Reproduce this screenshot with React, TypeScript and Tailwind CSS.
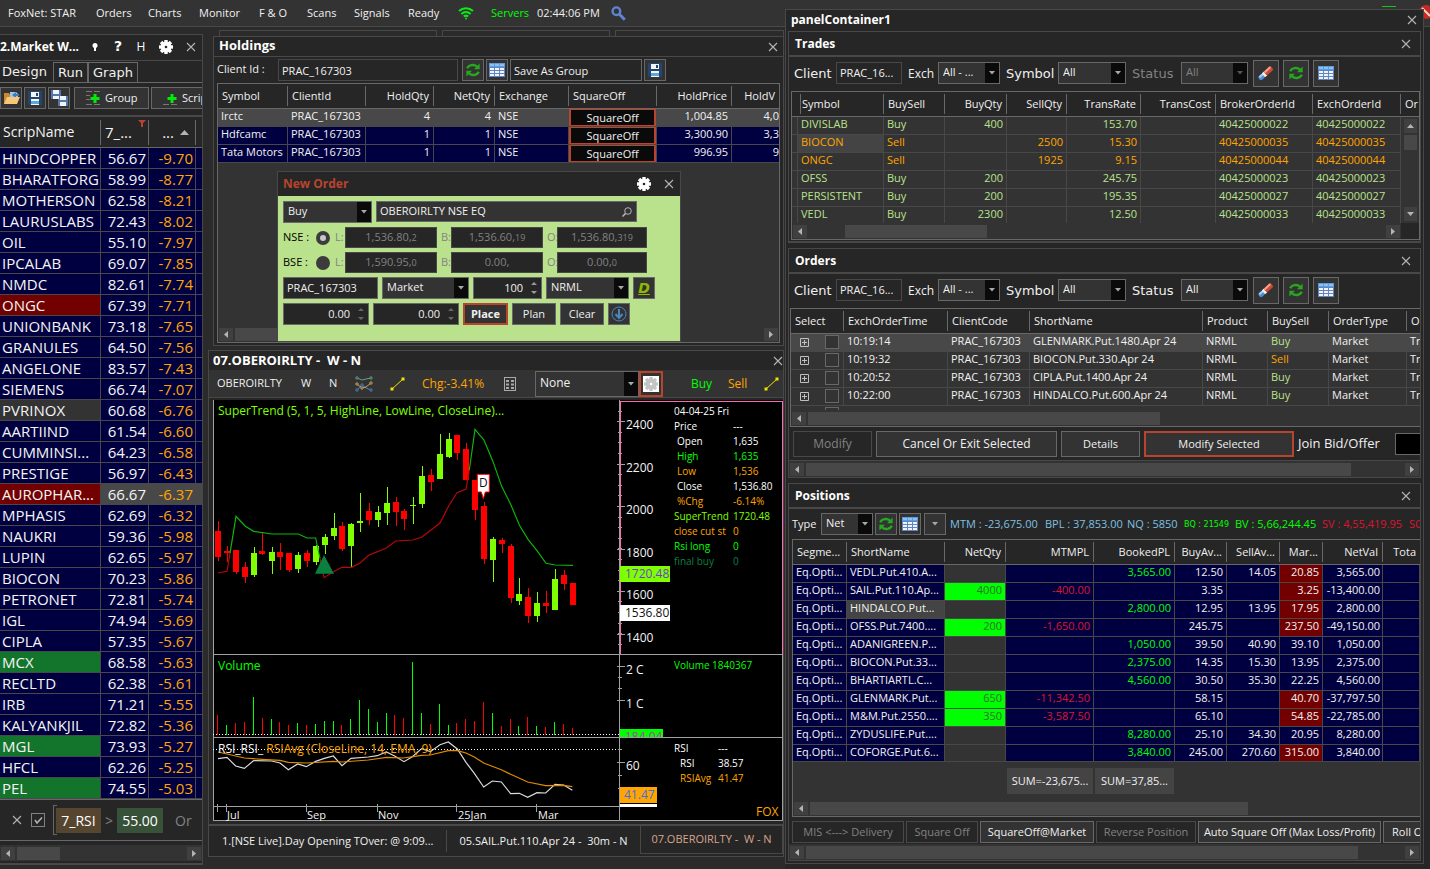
import React from 'react';

type Align = 'left' | 'right' | 'center';

interface Column {
  title: string;
  width?: number;
  align?: Align;
}

interface Cell {
  content: React.ReactNode;
  cls?: string;
}

type CellValue = React.ReactNode | Cell;

const isCell = (value: CellValue): value is Cell =>
  typeof value === 'object' && value !== null && 'content' in (value as object);

const alignClass: Record<Align, string> = {
  left: 'text-left',
  right: 'text-right',
  center: 'text-center',
};

/* ---------- Icons ---------- */

const CloseIcon = () => (
  <svg width="10" height="10" viewBox="0 0 10 10" stroke="#b4b4b4" strokeWidth="1.1">
    <path d="M1 1l8 8M9 1L1 9" />
  </svg>
);

const RefreshIcon = () => (
  <svg width="16" height="16" viewBox="0 0 16 16" fill="none" stroke="#27a81f" strokeWidth="2.4">
    <path d="M2.2 6.2C3.6 3 8.6 1.6 12 4.6" />
    <path d="M13.8 9.8C12.4 13 7.4 14.4 4 11.4" />
    <path d="M14.6 1.6v5.6H9z" fill="#27a81f" stroke="none" />
    <path d="M1.4 14.4V8.8H7z" fill="#27a81f" stroke="none" />
  </svg>
);

const TableIcon = () => (
  <svg width="16" height="14" viewBox="0 0 16 14">
    <rect width="16" height="14" fill="#5f86c0" />
    <rect x="0" y="0" width="16" height="4" fill="#5b9be0" />
    <path d="M1 1h4v2H1zM6 1h4v2H6zM11 1h4v2h-4z" fill="#8cc0f2" />
    <path d="M1 5h4v2H1zM6 5h4v2H6zM11 5h4v2h-4zM1 8h4v2H1zM6 8h4v2H6zM11 8h4v2h-4zM1 11h4v2H1zM6 11h4v2H6zM11 11h4v2h-4z" fill="#f1f2fb" />
  </svg>
);

const EraserIcon = () => (
  <svg width="16" height="16" viewBox="0 0 16 16">
    <g transform="rotate(-42 8 8)">
      <rect x="-1" y="5.500" width="6" height="5" rx="2" fill="#4b8fd8" />
      <rect x="0" y="5.800" width="5" height="2" rx="1" fill="#a9cdf2" />
      <rect x="4.500" y="5.500" width="3" height="5" fill="#f3efec" />
      <rect x="7" y="5.500" width="9" height="5" rx="1.500" fill="#cf4a32" />
      <rect x="7" y="5.500" width="8.500" height="2" rx="1" fill="#f2a48f" />
    </g>
  </svg>
);

const FloppyIcon = () => (
  <svg width="14" height="14" viewBox="0 0 14 14">
    <path d="M0 0h14v14H1l-1-1z" fill="#24466e" />
    <path d="M3 1h8v5H3z" fill="#f2f5f8" />
    <path d="M8 2h2v3H8z" fill="#24466e" />
    <path d="M3 8h8v6H3z" fill="#f4f7fa" />
    <path d="M3 10h8v3H3z" fill="#5aa8dc" />
  </svg>
);

const FolderIcon = () => (
  <svg width="17" height="14" viewBox="0 0 17 14">
    <path d="M1 2h5l1 2h7v9H1z" fill="#c98a35" />
    <path d="M7 1h6l2 2v4H7z" fill="#9cc7ee" />
    <path d="M9 4l4-3v2h3v2h-3v2z" fill="#3f7db8" />
    <path d="M1 13l3-7h13l-3 7z" fill="#f8c877" />
  </svg>
);

const GearIcon = ({ size = 14, color = '#ffffff', hole = '#262626' }: { size?: number; color?: string; hole?: string }) => (
  <svg width={size} height={size} viewBox="-7 -7 14 14">
    <circle r="5.4" fill={color} />
    {[0, 45, 90, 135].map(angle => (
      <rect key={angle} x="-1.7" y="-7" width="3.4" height="14" fill={color} transform={`rotate(${angle})`} />
    ))}
    <circle r="1.3" fill={hole} />
  </svg>
);

const WifiIcon = () => (
  <svg width="16" height="14" viewBox="0 0 16 14" fill="none" stroke="#12e61a" strokeWidth="2">
    <path d="M1 5C5 1.2 11 1.2 15 5" />
    <path d="M3.4 8C6 5.4 10 5.4 12.6 8" />
    <path d="M5.8 10.6c1.4-1.2 3-1.2 4.4 0" />
    <circle cx="8" cy="12.4" r="1" fill="#12e61a" stroke="none" />
  </svg>
);

const KeySearchIcon = () => (
  <svg width="15" height="15" viewBox="0 0 15 15" fill="none" stroke="#5f85d2">
    <circle cx="5.4" cy="5.2" r="3.8" strokeWidth="2.4" />
    <path d="M8.4 8.2l5.4 5.6" strokeWidth="3" />
  </svg>
);

const TrendIcon = () => (
  <svg width="16" height="14" viewBox="0 0 16 14">
    <path d="M2 12L13 2" stroke="#f2e200" />
    <rect x="0.5" y="10.5" width="3" height="3" fill="#f2e200" />
    <rect x="11.5" y="0.5" width="3" height="3" fill="#f2e200" />
  </svg>
);

const IndicatorIcon = () => (
  <svg width="18" height="16" viewBox="0 0 18 16" fill="none">
    <path d="M2 2l5 2 4-1 5-1" stroke="#5fa08d" />
    <path d="M2 14l5-5 4 3 5 2" stroke="#4a7fc0" />
    <path d="M2 8l5 4 4-1 5-4" stroke="#d0a55a" />
    <g fill="#333">
      <circle cx="2" cy="2" r="1.2" stroke="#5fa08d" />
      <circle cx="16" cy="2" r="1.2" stroke="#5fa08d" />
      <circle cx="2" cy="8" r="1.2" stroke="#d0a55a" />
      <circle cx="16" cy="7" r="1.2" stroke="#d0a55a" />
      <circle cx="2" cy="14" r="1.2" stroke="#4a7fc0" />
      <circle cx="16" cy="14" r="1.2" stroke="#4a7fc0" />
      <circle cx="7" cy="12" r="1.2" stroke="#d0a55a" />
      <circle cx="7" cy="9" r="1.2" stroke="#4a7fc0" />
    </g>
  </svg>
);

const SheetIcon = () => (
  <svg width="12" height="14" viewBox="0 0 12 14">
    <rect x="0.5" y="0.5" width="11" height="13" fill="none" stroke="#a8a8a8" />
    <path d="M2 3h3v2H2zM7 3h3v2H7zM2 6.500h3v2H2zM7 6.500h3v2H7zM2 10h3v2H2zM7 10h3v2H7z" fill="#a8a8a8" />
  </svg>
);

const AddRowsIcon = () => (
  <svg width="14" height="14" viewBox="0 0 14 14">
    <path d="M0 0h6v1H0zM8 0h6v1H8zM0 4h4v1H0zM0 8h4v1H0zM0 13h6v1H0zM8 13h6v1H8z" fill="#777" />
    <path d="M7.500 3h3v3h3v3h-3v3h-3V9h-3V6h3z" fill="#05e80a" />
  </svg>
);

const AddScripIcon = () => (
  <svg width="14" height="14" viewBox="0 0 14 14">
    <path d="M0 13h6v1H0zM8 13h6v1H8z" fill="#777" />
    <path d="M7.500 3h3v3h3v3h-3v3h-3V9h-3V6h3z" fill="#05e80a" />
  </svg>
);

const Caret = ({ dim }: { dim?: boolean }) => (
  <svg width="6" height="4" viewBox="0 0 6 4">
    <path d="M0 0h6L3 3.500z" fill={dim ? '#555' : '#a8a8a8'} />
  </svg>
);

/* ---------- Shared controls ---------- */

const IconButton = ({ label, children, className = 'h-[22px] w-[22px]' }: { label: string; children: React.ReactNode; className?: string }) => (
  <button aria-label={label} className={`flex shrink-0 items-center justify-center border border-[#686868] bg-[#333333] ${className}`}>
    {children}
  </button>
);

const SelectBox = ({ label, value, className, dim }: { label: string; value: string; className: string; dim?: boolean }) => (
  <div className={`relative flex h-[22px] shrink-0 border border-[#686868] bg-[#333333] ${className}`}>
    <select
      aria-label={label}
      disabled={dim}
      className={`w-full min-w-0 appearance-none bg-transparent pb-[2px] pl-1 text-[11px] leading-[18px] outline-none ${dim ? 'text-[#828282]' : 'text-[#f0f0f0]'}`}
    >
      <option>{value}</option>
    </select>
    <span className="pointer-events-none absolute inset-y-0 right-0 flex w-[14px] items-center justify-center bg-[#0a0a0a]">
      <Caret dim={dim} />
    </span>
  </div>
);

const TextField = ({ label, value, className }: { label: string; value: string; className: string }) => (
  <input
    aria-label={label}
    defaultValue={value}
    className={`h-[22px] min-w-0 border bg-[#262626] px-[3px] pb-[2px] text-[11px] text-[#f0f0f0] outline-none ${className}`}
  />
);

const Spinner = ({ label, value, className, dim }: { label: string; value: string; className: string; dim?: boolean }) => (
  <div className={`flex h-[22px] items-center border border-[#686868] bg-[#262626] ${className}`}>
    <input
      aria-label={label}
      defaultValue={value}
      className="w-full min-w-0 bg-transparent pr-2 text-right text-[11px] text-[#f0f0f0] outline-none"
    />
    <svg width="6" height="12" viewBox="0 0 6 12" className="mr-1 shrink-0">
      <path d="M0 3h6L3 0zM0 9h6l-3 3z" fill={dim ? '#666' : '#999'} />
    </svg>
  </div>
);

const ScrollBar = ({ thumb, right = true }: { thumb: string; right?: boolean }) => (
  <div className="flex h-4 items-center bg-[#333333] px-px">
    <span className="flex h-[13px] w-[14px] shrink-0 items-center justify-center bg-[#404040]">
      <svg width="4" height="7" viewBox="0 0 4 7"><path d="M4 0v7L0 3.500z" fill="#b4b4b4" /></svg>
    </span>
    <span className="h-[13px] flex-1 px-[2px]">
      <span className={`block h-full bg-[#484848] ${thumb}`} />
    </span>
    {right && (
      <span className="flex h-[13px] w-[14px] shrink-0 items-center justify-center bg-[#404040]">
        <svg width="4" height="7" viewBox="0 0 4 7"><path d="M0 0v7l4-3.500z" fill="#b4b4b4" /></svg>
      </span>
    )}
  </div>
);

const PanelTitle = ({ children }: { children: React.ReactNode }) => (
  <div className="flex h-[25px] items-center justify-between border-b-2 border-[#484848] px-[6px]">
    <h2 className="text-[12px] font-bold leading-5 text-white">{children}</h2>
    <button aria-label="Close" className="mr-[3px]"><CloseIcon /></button>
  </div>
);

const DataGrid = ({ columns, rows, rowClass }: {
  columns: Column[];
  rows: CellValue[][];
  rowClass?: (index: number) => string;
}) => (
  <table className="w-full table-fixed border-separate border-spacing-0 text-[11px] text-[#f0f0f0]">
    <colgroup>
      {columns.map((c, i) => <col key={i} style={c.width ? { width: c.width } : undefined} />)}
    </colgroup>
    <thead>
      <tr className="bg-[#262626]">
        {columns.map((c, i) => (
          <th key={i} className={`h-[25px] border-b border-[#686868] p-0 font-normal ${alignClass[c.align ?? 'left']}`}>
            <div className={`h-5 overflow-hidden whitespace-nowrap px-1 leading-5 ${i < columns.length - 1 ? 'border-r border-[#686868]' : ''}`}>
              {c.title}
            </div>
          </th>
        ))}
      </tr>
    </thead>
    <tbody>
      {rows.map((row, r) => (
        <tr key={r} className={rowClass ? rowClass(r) : ''}>
          {row.map((value, i) => {
            const cell: Cell = isCell(value) ? value : { content: value as React.ReactNode };
            return (
              <td
                key={i}
                className={`h-[18px] overflow-hidden whitespace-nowrap border-b border-r border-[#484848] px-[3px] pb-[3px] pt-0 leading-[14px] ${alignClass[columns[i].align ?? 'left']} ${cell.cls ?? ''}`}
              >
                {cell.content}
              </td>
            );
          })}
        </tr>
      ))}
    </tbody>
  </table>
);

/* ---------- Market watch ---------- */

const scrips: [string, string, string, string?][] = [
  ['HINDCOPPER', '56.67', '-9.70'],
  ['BHARATFORG', '58.99', '-8.77'],
  ['MOTHERSON', '62.58', '-8.21'],
  ['LAURUSLABS', '72.43', '-8.02'],
  ['OIL', '55.10', '-7.97'],
  ['IPCALAB', '69.07', '-7.85'],
  ['NMDC', '82.61', '-7.74'],
  ['ONGC', '67.39', '-7.71', 'bg-[#730000]'],
  ['UNIONBANK', '73.18', '-7.65'],
  ['GRANULES', '64.50', '-7.56'],
  ['ANGELONE', '83.57', '-7.43'],
  ['SIEMENS', '66.74', '-7.07'],
  ['PVRINOX', '60.68', '-6.76', 'bg-[#333333]'],
  ['AARTIIND', '61.54', '-6.60'],
  ['CUMMINSI...', '64.23', '-6.58'],
  ['PRESTIGE', '56.97', '-6.43'],
  ['AUROPHAR...', '66.67', '-6.37', 'bg-[#730000]'],
  ['MPHASIS', '62.69', '-6.32'],
  ['NAUKRI', '59.36', '-5.98'],
  ['LUPIN', '62.65', '-5.97'],
  ['BIOCON', '70.23', '-5.86'],
  ['PETRONET', '72.81', '-5.74'],
  ['IGL', '74.94', '-5.69'],
  ['CIPLA', '57.35', '-5.67'],
  ['MCX', '68.58', '-5.63', 'bg-[#13752b]'],
  ['RECLTD', '62.38', '-5.61'],
  ['IRB', '71.21', '-5.55'],
  ['KALYANKJIL', '72.82', '-5.36'],
  ['MGL', '73.93', '-5.27', 'bg-[#13752b]'],
  ['HFCL', '62.26', '-5.25'],
  ['PEL', '74.55', '-5.03', 'bg-[#13752b]'],
];

const MarketWatch = () => (
  <aside className="mt-[7px] w-[203px] shrink-0 self-start overflow-hidden border-r border-t border-[#484848] bg-[#262626]">
    <div className="flex h-[26px] items-center border-b border-[#484848] pb-[2px] text-white">
      <h2 className="w-[91px] whitespace-nowrap text-[12px] font-bold">2.Market W...</h2>
      <button aria-label="Pin" className="w-[10px]">
        <svg width="8" height="12" viewBox="0 0 8 12"><circle cx="4" cy="4.500" r="2.500" fill="#fff" /><path d="M3 5h2v5H3z" fill="#fff" /></svg>
      </button>
      <button aria-label="Help" className="w-[34px] font-['DejaVu_Sans'] text-[14px] font-bold">?</button>
      <button aria-label="History" className="w-3 text-[12px]">H</button>
      <button aria-label="Settings" className="ml-[12px]"><GearIcon /></button>
      <button aria-label="Close" className="ml-[13px]"><CloseIcon /></button>
    </div>
    <div className="flex h-[22px] items-end border-b border-[#686868] font-['DejaVu_Sans'] text-[13px] text-[#f0f0f0]">
      <button className="h-5 w-[53px] pl-[2px] text-left">Design</button>
      <button className="h-5 w-[35px] border border-b-0 border-[#686868] leading-[18px]">Run</button>
      <button className="h-5 w-[50px] border border-b-0 border-[#686868] leading-[18px]">Graph</button>
    </div>
    <div className="flex h-[34px] gap-[2px] border-b-2 border-[#484848] pt-1 text-[11px] text-[#f0f0f0]">
      <IconButton label="Open"><FolderIcon /></IconButton>
      <IconButton label="Save"><FloppyIcon /></IconButton>
      <IconButton label="Save all">
        <svg width="17" height="16" viewBox="0 0 17 16">
          <path d="M0 0h10v9H0zM7 6h10v10H7z" fill="#5476a8" />
          <path d="M2 0h6v4H2zM2 6h6v3H2zM9 6h6v4H9zM9 12h6v4H9z" fill="#eef4fb" />
        </svg>
      </IconButton>
      <button className="ml-[2px] flex h-[22px] w-[75px] shrink-0 items-center gap-[5px] border border-[#686868] bg-[#333333] pl-[11px]"><AddRowsIcon />Group</button>
      <button className="flex h-[22px] w-[75px] shrink-0 items-center gap-[5px] border border-[#686868] bg-[#333333] pl-[11px]"><AddScripIcon />Scrip</button>
    </div>
    <table className="w-full table-fixed border-separate border-spacing-0 text-[15px] text-[#f4f4f4]">
      <colgroup>
        <col className="w-[101px]" />
        <col className="w-12" />
        <col className="w-[47px]" />
        <col />
      </colgroup>
      <thead>
        <tr className="text-left">
          <th className="h-[31px] border-b border-[#686868] p-0 font-normal"><div className="h-[25px] border-r border-[#686868] pl-[3px] text-[14px] leading-6">ScripName</div></th>
          <th className="border-b border-[#686868] p-0 font-normal">
            <div className="flex h-[25px] justify-between border-r border-[#686868] pl-1 pr-[2px] leading-6">
              7_...
              <svg width="8" height="7" viewBox="0 0 8 7"><path d="M0 0h8L5 3v4H3V3z" fill="#b8442e" /></svg>
            </div>
          </th>
          <th className="border-b border-[#686868] p-0 font-normal">
            <div className="flex h-[25px] items-center justify-end gap-[6px] border-r border-[#686868] pr-[6px] leading-6">
              ...
              <svg width="9" height="5" viewBox="0 0 9 5"><path d="M0 5h9L4.500 0z" fill="#b4b4b4" /></svg>
            </div>
          </th>
          <th className="border-b border-[#686868] p-0" />
        </tr>
      </thead>
      <tbody>
        {scrips.map(([name, rsi, change, bg]) => (
          <tr key={name} className={name === 'AUROPHAR...' ? 'bg-[#484848]' : 'bg-[#000040]'}>
            <td className={`h-[21px] whitespace-nowrap border-b border-r border-[#484848] py-0 pl-[2px] leading-5 ${bg ?? ''}`}>{name}</td>
            <td className="border-b border-r border-[#484848] py-0 pr-[2px] text-right leading-5">{rsi}</td>
            <td className="border-b border-r border-[#484848] py-0 pr-[2px] text-right leading-5 text-[#ffa500]">{change}</td>
            <td className="border-b border-[#484848] p-0" />
          </tr>
        ))}
      </tbody>
    </table>
    <div className="flex h-[42px] items-center border-b border-t border-[#686868] text-[14px]">
      <button aria-label="Clear filter" className="ml-3"><CloseIcon /></button>
      <label className="relative ml-[9px] h-[14px] w-[14px]">
        <input type="checkbox" aria-label="Filter enabled" defaultChecked className="peer block h-[14px] w-[14px] appearance-none border border-[#828282]" />
        <svg width="14" height="14" viewBox="0 0 14 14" className="pointer-events-none absolute left-0 top-0 hidden peer-checked:block" fill="none" stroke="#b4b4b4" strokeWidth="1.500">
          <path d="M4 7l2 3 5-5.500" />
        </svg>
      </label>
      <span className="ml-2 h-[30px] w-1 border border-r-0 border-[#686868]" />
      <span className="-ml-px flex h-[25px] w-[45px] items-center justify-center bg-[#57462f] text-white">7_RSI</span>
      <span className="w-4 text-center text-[#828282]">&gt;</span>
      <span className="flex h-[25px] w-[46px] items-center justify-center bg-[#375238] text-white">55.00</span>
      <span className="ml-3 text-[#828282]">Or</span>
    </div>
    <div className="border-b-2 border-[#484848] pb-[2px] pt-1"><ScrollBar thumb="w-[43px]" /></div>
  </aside>
);

/* ---------- Holdings ---------- */

const holdingColumns: Column[] = [
  { title: 'Symbol', width: 70 },
  { title: 'ClientId', width: 78 },
  { title: 'HoldQty', width: 68, align: 'right' },
  { title: 'NetQty', width: 61, align: 'right' },
  { title: 'Exchange', width: 74 },
  { title: 'SquareOff', width: 88 },
  { title: 'HoldPrice', width: 75, align: 'right' },
  { title: 'HoldV', align: 'right' },
];

const squareOff: Cell = {
  content: (
    <button className="block h-[17px] w-full border-2 border-[#b8442e] border-y bg-[#0a0a0a] text-center leading-4">SquareOff</button>
  ),
  cls: 'p-0!',
};

const holdings: CellValue[][] = [
  ['Irctc', 'PRAC_167303', '4', '4', 'NSE', squareOff, '1,004.85', { content: '4,0', cls: 'px-0! border-r-0' }],
  ['Hdfcamc', 'PRAC_167303', '1', '1', 'NSE', squareOff, '3,300.90', { content: '3,3', cls: 'px-0! border-r-0' }],
  ['Tata Motors', 'PRAC_167303', '1', '1', 'NSE', squareOff, '996.95', { content: '9', cls: 'px-0! border-r-0' }],
];

const Quote = ({ label, price, qty, className }: { label: string; price: string; qty: string; className: string }) => (
  <div className="flex items-center text-[#828282]">
    <span className="w-[10px] whitespace-nowrap">{label}:</span>
    <output aria-label={label} className={`flex h-[21px] items-center justify-center border border-[#484848] bg-[#262626] ${className}`}>
      {price},<span className="pt-px text-[9px]">{qty}</span>
    </output>
  </div>
);

const ExchangeRow = ({ name, checked, quotes }: { name: string; checked?: boolean; quotes: [string, string][] }) => (
  <div className="flex h-[21px] items-center gap-1">
    <label className="flex w-[48px] items-center justify-between pr-px text-black">
      {name} :
      <input
        type="radio"
        name="exchange"
        defaultChecked={checked}
        className="h-[14px] w-[14px] appearance-none rounded-full border-4 border-[#3c3c3c] bg-[#3c3c3c] checked:bg-[#c8c8c8]"
      />
    </label>
    <Quote label="L" price={quotes[0][0]} qty={quotes[0][1]} className="w-[92px]" />
    <Quote label="B" price={quotes[1][0]} qty={quotes[1][1]} className="w-[92px]" />
    <Quote label="O" price={quotes[2][0]} qty={quotes[2][1]} className="w-[90px]" />
  </div>
);

const NewOrder = () => (
  <form className="absolute bottom-0 left-[59px] w-[404px] border border-[#484848] bg-[#bae28d] text-[11px]">
    <div className="flex h-6 items-center bg-[#262626] pl-[5px] pr-[6px]">
      <h2 className="flex-1 text-[12px] font-bold text-[#b8442e]">New Order</h2>
      <button type="button" aria-label="Settings" className="mr-[13px]"><GearIcon /></button>
      <button type="button" aria-label="Close"><CloseIcon /></button>
    </div>
    <div className="flex h-[145px] flex-col gap-1 pl-[5px] pt-[5px]">
      <div className="flex gap-1">
        <SelectBox label="Side" value="Buy" className="w-[89px]" />
        <div className="flex h-[21px] w-[261px] items-center border border-[#686868] bg-[#333333] pr-1">
          <input aria-label="Scrip" defaultValue="OBEROIRLTY NSE EQ" className="min-w-0 flex-1 bg-transparent px-[3px] text-[#f0f0f0] outline-none" />
          <svg width="10" height="10" viewBox="0 0 10 10" fill="none" stroke="#b4b4b4"><circle cx="6" cy="4" r="3.300" /><path d="M3.600 6.400L0.500 9.500" strokeWidth="1.500" /></svg>
        </div>
      </div>
      <ExchangeRow name="NSE" checked quotes={[['1,536.80', '2'], ['1,536.60', '19'], ['1,536.80', '319']]} />
      <ExchangeRow name="BSE" quotes={[['1,590.95', '0'], ['0.00', ''], ['0.00', '0']]} />
      <div className="flex gap-1">
        <TextField label="Client" value="PRAC_167303" className="w-[95px] border-[#686868]" />
        <SelectBox label="Order type" value="Market" className="w-[87px]" />
        <Spinner label="Quantity" value="100" className="w-[69px]" />
        <SelectBox label="Product" value="NRML" className="w-[83px]" />
        <IconButton label="Depth"><span className="font-['DejaVu_Sans'] text-[14px] font-bold italic leading-4 text-[#8fb900] underline">D</span></IconButton>
      </div>
      <div className="flex gap-1 text-[#f0f0f0]">
        <Spinner label="Price" value="0.00" className="w-[86px]" dim />
        <Spinner label="Trigger" value="0.00" className="w-[86px]" dim />
        <button type="button" className="h-[22px] w-[45px] border-2 border-[#b8442e] bg-[#333333] font-bold leading-[18px]">Place</button>
        <button type="button" className="h-[22px] w-11 border border-[#686868] bg-[#333333]">Plan</button>
        <button type="button" className="h-[22px] w-11 border border-[#686868] bg-[#333333]">Clear</button>
        <IconButton label="Download">
          <svg width="16" height="16" viewBox="0 0 16 16" fill="none" stroke="#4a86c0">
            <circle cx="8" cy="8" r="7" />
            <path d="M8 3v8M4.500 8L8 12l3.500-4" strokeWidth="2" />
          </svg>
        </IconButton>
      </div>
    </div>
  </form>
);

const Holdings = () => (
  <section className="ml-[10px] border border-[#484848] bg-[#262626] pb-[2px]">
    <div className="flex h-5 items-center justify-between border-b border-[#484848] pl-[5px] pr-[5px]">
      <h2 className="pb-[2px] text-[13px] font-bold leading-[17px] text-white">Holdings</h2>
      <button aria-label="Close"><CloseIcon /></button>
    </div>
    <div className="flex h-[26px] items-center gap-[2px] pl-[3px] text-[11px] text-[#f0f0f0]">
      <label htmlFor="holding-client" className="w-[59px] whitespace-nowrap pb-px">Client Id :</label>
      <input id="holding-client" defaultValue="PRAC_167303" className="mr-[2px] h-[22px] w-[180px] border border-[#484848] bg-[#262626] px-[3px] outline-none" />
      <IconButton label="Refresh"><RefreshIcon /></IconButton>
      <IconButton label="Columns"><TableIcon /></IconButton>
      <input aria-label="Group name" defaultValue="Save As Group" className="h-[22px] w-[132px] border border-[#686868] bg-[#262626] px-[3px] outline-none" />
      <IconButton label="Save"><FloppyIcon /></IconButton>
    </div>
    <div className="relative mx-[3px] flex h-[260px] flex-col overflow-hidden border border-[#686868] bg-[#333333]">
      <div className="flex-1">
        <DataGrid
          columns={holdingColumns}
          rows={holdings}
          rowClass={i => (i === 0 ? 'bg-[#484848]' : 'bg-[#000040]')}
        />
      </div>
      <ScrollBar thumb="w-[300px]" />
      <NewOrder />
    </div>
  </section>
);

/* ---------- Chart ---------- */

// [centre, high, body top, body bottom, low, rising], three units per pixel
const candles: [number, number, number, number, number, number][] = [
  [39, 528, 558, 636, 647, 0], [66, 603, 618, 624, 650, 0], [93, 615, 615, 682, 687, 0],
  [120, 652, 666, 696, 713, 0], [147, 606, 625, 690, 696, 1], [172, 562, 618, 628, 630, 0],
  [201, 605, 621, 648, 686, 1], [225, 594, 621, 636, 675, 0], [252, 625, 625, 675, 680, 0],
  [279, 621, 630, 672, 684, 1], [306, 615, 624, 648, 665, 0], [333, 600, 603, 651, 660, 1],
  [360, 567, 576, 600, 627, 1], [387, 504, 549, 573, 585, 1], [411, 531, 543, 612, 617, 0],
  [438, 534, 537, 603, 669, 1], [465, 444, 528, 534, 560, 1], [492, 474, 498, 525, 540, 0],
  [519, 483, 501, 525, 545, 1], [546, 426, 474, 504, 540, 1], [573, 456, 471, 501, 543, 0],
  [597, 491, 498, 522, 555, 0], [624, 456, 480, 483, 537, 1], [651, 363, 393, 477, 488, 1],
  [678, 372, 390, 411, 438, 0], [705, 267, 327, 402, 402, 1], [732, 264, 282, 336, 339, 1],
  [756, 270, 270, 324, 345, 0], [783, 294, 312, 405, 405, 0], [810, 405, 405, 495, 524, 0],
  [837, 471, 483, 642, 657, 0], [864, 576, 582, 645, 711, 1], [891, 579, 585, 597, 624, 0],
  [918, 597, 603, 759, 774, 0], [942, 699, 747, 768, 779, 1], [969, 729, 756, 813, 834, 0],
  [996, 741, 774, 813, 831, 1], [1023, 738, 774, 783, 804, 0], [1050, 672, 702, 795, 795, 1],
  [1077, 675, 690, 717, 735, 0], [1104, 714, 714, 780, 780, 0],
];

// [centre, height, rising]
const volumes: [number, number, number][] = [
  [38, 59, 0], [65, 29, 1], [92, 35, 0], [118, 38, 0], [146, 113, 1], [172, 50, 0], [200, 47, 1],
  [223, 38, 0], [250, 29, 0], [278, 35, 1], [304, 29, 0], [332, 32, 1], [358, 41, 1], [385, 41, 1],
  [409, 29, 0], [436, 47, 1], [463, 104, 1], [490, 77, 1], [517, 38, 1], [544, 65, 1], [569, 59, 0],
  [595, 50, 0], [622, 218, 1], [650, 65, 1], [676, 32, 0], [703, 92, 1], [730, 29, 1], [754, 35, 0],
  [781, 47, 0], [808, 41, 0], [836, 98, 0], [862, 65, 1], [889, 26, 0], [916, 47, 0], [940, 26, 1],
  [967, 53, 0], [994, 26, 1], [1021, 23, 0], [1049, 38, 1], [1076, 32, 0], [1103, 20, 0],
];

const priceTicks: [string, number][] = [
  ['2400', 21], ['2200', 64], ['2000', 106], ['1800', 149], ['1600', 191], ['1400', 234],
];

const legend: [string, string, string, number][] = [
  ['Price', '---', '#ffffff', 461],
  ['Open', '1,635', '#ffffff', 464],
  ['High', '1,635', '#00ff00', 464],
  ['Low', '1,536', '#ffa500', 464],
  ['Close', '1,536.80', '#ffffff', 464],
  ['%Chg', '-6.14%', '#ffa500', 464],
  ['SuperTrend', '1720.48', '#7fff00', 461],
  ['close cut st', '0', '#ffa500', 461],
  ['Rsi long', '0', '#00ff00', 461],
  ['final buy', '0', '#0a8040', 461],
];

const months: [string, number, number][] = [
  ['Jul', 13, 14], ['Sep', 93, 94], ['Nov', 164, 165], ['25Jan', 243, 245], ['Mar', 323, 325],
];

const PriceChart = () => (
  <svg viewBox="0 0 570 421" className="block w-full bg-black text-[12px]" role="img" aria-label="OBEROIRLTY weekly chart">
    {/* Price, volume and RSI drawings */}
    <g transform="translate(-8 -55) scale(0.333333)" fill="none">
      <g shapeRendering="crispEdges">
        {candles.map(([x, high, top, bottom, low, up]) => (
          <g key={x} fill={up ? '#7fff00' : '#ff0000'}>
            <rect x={x - 1} y={high} width="3" height={low - high} />
            <rect x={x - 9} y={top} width="18" height={bottom - top} />
          </g>
        ))}
        {volumes.map(([x, h, up]) => (
          <rect key={x} x={x - 1} y={1169 - h} width="3" height={h} fill={up ? '#00ff00' : '#ff0000'} />
        ))}
      </g>
      <g strokeWidth="3.500">
        <path stroke="#b80808" d="M39 684L66 679L75 625M345 640L357 698L384 681L411 667L440 667L465 654L492 630L518 620L545 608L572 588L624 585L651 576L705 534L731 483L756 443L783 432L793 375" />
        <path stroke="#0ab80a" d="M75 625L93 514L120 543L146 559L200 567L280 567L306 579L332 579L345 640M793 375L810 253L837 285L864 350L890 424L917 478L943 540L969 583L996 617L1023 655L1050 660L1104 661" />
        <path stroke="#dcdcdc" d="M39 1241L66 1237L92 1263L118 1270L146 1247L200 1248L225 1254L250 1274L278 1257L304 1265L332 1249L358 1240L385 1233L411 1262L438 1240L490 1236L517 1232L544 1221L569 1233L597 1250L622 1235L650 1211L676 1220L705 1199L730 1191L757 1212L783 1252L808 1285L836 1326L862 1308L889 1311L917 1346L943 1345L968 1357L996 1343L1022 1344L1050 1318L1076 1320L1102 1336" />
        <path stroke="#e08c00" d="M39 1221L66 1227L118 1239L172 1243L225 1246L250 1252L304 1254L385 1249L411 1251L490 1245L544 1237L595 1239L650 1231L676 1230L730 1217L757 1217L783 1224L808 1236L836 1254L889 1274L917 1288L968 1311L1022 1322L1076 1321L1102 1325" />
      </g>
      <path d="M357 630L387 686H330z" fill="#0a8040" />
      <path d="M817 388h36v53h-12l-6 20l-6 -20h-12z" fill="#fff" stroke="#ff0000" strokeWidth="3" />
    </g>
    <text x="266" y="87" fill="#111">D</text>

    {/* Frames and axes */}
    <g shapeRendering="crispEdges" stroke="#a0a0a0" fill="none">
      <path d="M0.500 0v421M0 254.500h570M0 337.500h570M0 406.500h406M0 420.500h570M406.500 0v421M569.500 254v167" />
      <path d="M0 334.500h406M0 349.500h406" stroke="#ffffff" strokeDasharray="1 2" />
      {priceTicks.map(([label, y]) => <path key={label} d={`M404 ${y}.500h8`} />)}
      {Array.from({ length: 23 }, (_, i) => <path key={i} d={`M405 ${11 + i * 10.6}h4`} />)}
      <path d="M404 266.500h8M404 300.500h8M405 277.500h4M405 288.500h4M404 362.500h8M405 375.500h4M405 388.500h4M405 349.500h4" />
      <path d="M4.500 404v8" />
      {months.map(([label, x]) => <path key={label} d={`M${x}.500 404v8`} />)}
      <path d="M407.500 254V1.500h162V254" stroke="#ff69b4" />
    </g>

    <g fill="#f4f4f4">
      {priceTicks.map(([label, y]) => <text key={label} x="413" y={y + 8}>{label}</text>)}
      <text x="413" y="274">2 C</text>
      <text x="413" y="308">1 C</text>
      <text x="413" y="370">60</text>
      {months.map(([label, , x]) => <text key={label} x={x} y="419" className="text-[11px]">{label}</text>)}
    </g>

    {/* Price tags */}
    <rect x="407" y="166" width="50" height="16" fill="#7fff00" />
    <text x="412" y="178" fill="#6a3fd0">1720.48</text>
    <rect x="407" y="205" width="50" height="16" fill="#ffffff" />
    <text x="412" y="217" fill="#111">1536.80</text>
    <svg x="407" y="329" width="43" height="8">
      <rect width="43" height="8" fill="#00ff00" />
      <text x="5" y="12" fill="#b040a0">184.04</text>
    </svg>
    <rect x="407" y="387" width="37" height="16" fill="#ffa500" />
    <text x="411" y="399" fill="#3f6fe0">41.47</text>
    <rect x="407" y="404" width="37" height="3" fill="#ffffff" />

    <text x="5" y="15" fill="#7fff00">SuperTrend (5, 1, 5, HighLine, LowLine, CloseLine)...</text>
    <text x="5" y="270" fill="#00ff00">Volume</text>
    <text x="5" y="353" fill="#f4f4f4">RSI_RSI_ <tspan fill="#ffa500">RSIAvg (CloseLine, 14, EMA, 9)</tspan></text>
    <text x="543" y="416" fill="#ffa500">FOX</text>
    <g className="text-[10px]">
      <text x="461" y="15" fill="#ffffff">04-04-25 Fri</text>
      {legend.map(([label, value, color, x], i) => (
        <g key={label} fill={color}>
          <text x={x} y={30 + i * 15}>{label}</text>
          <text x="520" y={30 + i * 15}>{value}</text>
        </g>
      ))}
      <text x="461" y="269" fill="#00ff00">Volume 1840367</text>
      <g fill="#ffffff">
        <text x="461" y="352">RSI</text>
        <text x="505" y="352">---</text>
        <text x="467" y="367">RSI</text>
        <text x="505" y="367">38.57</text>
      </g>
      <g fill="#ffa500">
        <text x="467" y="382">RSIAvg</text>
        <text x="505" y="382">41.47</text>
      </g>
    </g>
  </svg>
);

const ChartPanel = () => (
  <section className="ml-[5px] mt-1 border border-[#484848] bg-[#262626]">
    <div className="flex h-[19px] items-center justify-between pl-1">
      <h2 className="whitespace-pre text-[13px] font-bold leading-[17px] text-white">07.OBEROIRLTY -  W - N</h2>
      <button aria-label="Close"><CloseIcon /></button>
    </div>
    <div className="flex h-[27px] items-center bg-[#333333] pl-2 text-[11px] text-[#f0f0f0]">
      <span className="w-[84px]">OBEROIRLTY</span>
      <span className="w-7">W</span>
      <span className="w-[26px]">N</span>
      <button aria-label="Indicators" className="w-[35px]"><IndicatorIcon /></button>
      <button aria-label="Draw line" className="w-8"><TrendIcon /></button>
      <span className="w-[82px] whitespace-nowrap text-[12px] text-[#ffa500]">Chg:-3.41%</span>
      <button aria-label="Data sheet" className="w-[31px]"><SheetIcon /></button>
      <div className="relative flex h-[26px] w-[104px] border border-[#686868]">
        <select aria-label="Study" className="w-full appearance-none bg-transparent pb-[2px] pl-1 text-[12px] outline-none"><option>None</option></select>
        <span className="pointer-events-none absolute inset-y-0 right-0 flex w-[14px] items-center justify-center bg-[#0a0a0a]"><Caret /></span>
      </div>
      <button aria-label="Chart settings" className="flex h-[26px] w-6 items-center justify-center border-2 border-[#b8442e] bg-[#333333]">
        <span className="flex h-4 w-4 items-center justify-center bg-white"><GearIcon size={14} color="#c4c4c4" hole="#ffffff" /></span>
      </button>
      <button className="ml-7 w-[37px] text-left text-[12px] text-[#00ff00]">Buy</button>
      <button className="w-9 text-left text-[12px] text-[#ffa500]">Sell</button>
      <button aria-label="Draw trend"><TrendIcon /></button>
    </div>
    <div className="border-t border-[#484848] pb-[3px] pl-1 pt-[2px]">
      <PriceChart />
    </div>
    <div className="flex h-[32px] border-t-2 border-[#484848] text-[11px] text-[#f0f0f0]">
      <button className="my-1 w-[238px] shrink-0 whitespace-nowrap border-r border-[#484848] pl-[13px] text-left">1.[NSE Live].Day Opening TOver: @ 9:09...</button>
      <button className="w-[193px] shrink-0 whitespace-pre text-center">05.SAIL.Put.110.Apr 24 -  30m - N</button>
      <button className="mb-[2px] flex-1 whitespace-pre border border-t-0 border-[#484848] text-[#d8a58c]">07.OBEROIRLTY -  W - N</button>
    </div>
  </section>
);

/* ---------- Trades / Orders / Positions ---------- */

const FilterBar = ({ id, statusDim }: { id: string; statusDim?: boolean }) => (
  <div className="flex h-[34px] items-center pl-[5px] font-['DejaVu_Sans'] text-[13px] text-[#f0f0f0]">
    <label htmlFor={id} className="w-[42px] shrink-0">Client</label>
    <input id={id} defaultValue="PRAC_16..." className="mb-[3px] h-[22px] w-[66px] border border-[#484848] bg-[#262626] px-[3px] font-['Open_Sans'] text-[11px] outline-none" />
    <span className="ml-[6px] w-[30px] font-['Open_Sans'] text-[12px]">Exch</span>
    <span className="mb-[3px] font-['Open_Sans']"><SelectBox label="Exchange" value="All - ..." className="w-[62px]" /></span>
    <span className="ml-[6px] w-[52px]">Symbol</span>
    <span className="mb-[3px] font-['Open_Sans']"><SelectBox label="Symbol" value="All" className="w-[68px]" /></span>
    <span className={`ml-[6px] w-[49px] ${statusDim ? 'text-[#828282]' : ''}`}>Status</span>
    <span className="mb-[3px] font-['Open_Sans']"><SelectBox label="Status" value="All" className="w-[67px]" dim={statusDim} /></span>
    <div className="mb-[2px] ml-[5px] flex gap-1">
      <IconButton label="Clear" className="h-[27px] w-[26px]"><EraserIcon /></IconButton>
      <IconButton label="Refresh" className="h-[27px] w-[26px]"><RefreshIcon /></IconButton>
      <IconButton label="Columns" className="h-[27px] w-[26px]"><TableIcon /></IconButton>
    </div>
  </div>
);

const tradeColumns: Column[] = [
  { title: '', width: 6 },
  { title: 'Symbol', width: 86 },
  { title: 'BuySell', width: 61 },
  { title: 'BuyQty', width: 62, align: 'right' },
  { title: 'SellQty', width: 60, align: 'right' },
  { title: 'TransRate', width: 74, align: 'right' },
  { title: 'TransCost', width: 75, align: 'right' },
  { title: 'BrokerOrderId', width: 97 },
  { title: 'ExchOrderId', width: 88 },
  { title: 'Or' },
];

const trades: CellValue[][] = [
  ['', 'DIVISLAB', 'Buy', '400', '', '153.70', '', '40425000022', '40425000022', ''],
  ['', { content: 'BIOCON', cls: 'bg-[#444444]' }, 'Sell', '', '2500', '15.30', '', '40425000035', '40425000035', ''],
  ['', 'ONGC', 'Sell', '', '1925', '9.15', '', '40425000044', '40425000044', ''],
  ['', 'OFSS', 'Buy', '200', '', '245.75', '', '40425000023', '40425000023', ''],
  ['', 'PERSISTENT', 'Buy', '200', '', '195.35', '', '40425000027', '40425000027', ''],
  ['', 'VEDL', 'Buy', '2300', '', '12.50', '', '40425000033', '40425000033', ''],
];

const Trades = () => (
  <section className="border border-b-2 border-[#484848] pb-px">
    <PanelTitle>Trades</PanelTitle>
    <FilterBar id="trade-client" statusDim />
    <div className="ml-[2px] border border-[#686868] bg-[#333333]">
      <div className="relative h-[131px] overflow-hidden">
        <DataGrid
          columns={tradeColumns}
          rows={trades}
          rowClass={i => (i === 1 || i === 2 ? 'text-[#ffa500]' : 'text-[#bae28d]')}
        />
        <div className="absolute bottom-0 right-0 top-[25px] flex w-[18px] flex-col items-center bg-[#333333] py-[2px]">
          <span className="flex h-[14px] w-[13px] items-center justify-center bg-[#404040]"><svg width="7" height="4" viewBox="0 0 7 4"><path d="M0 4h7L3.500 0z" fill="#b4b4b4" /></svg></span>
          <span className="mt-[2px] h-[15px] w-[13px] bg-[#484848]" />
          <span className="mt-auto flex h-[14px] w-[13px] items-center justify-center bg-[#404040]"><svg width="7" height="4" viewBox="0 0 7 4"><path d="M0 0h7L3.500 4z" fill="#b4b4b4" /></svg></span>
        </div>
      </div>
      <div className="bg-[#262626] pr-[18px]"><ScrollBar thumb="ml-9 w-[142px]" /></div>
    </div>
  </section>
);

const orderColumns: Column[] = [
  { title: 'Select', width: 53 },
  { title: 'ExchOrderTime', width: 104 },
  { title: 'ClientCode', width: 82 },
  { title: 'ShortName', width: 173 },
  { title: 'Product', width: 65 },
  { title: 'BuySell', width: 61 },
  { title: 'OrderType', width: 78 },
  { title: 'O' },
];

const selectCell: Cell = {
  content: (
    <div className="flex items-center gap-4 pl-[6px]">
      <button aria-label="Expand" className="h-[9px] w-[9px]">
        <svg width="9" height="9" viewBox="0 0 9 9" className="block" fill="none" stroke="#c0c0c0"><path d="M0.500 0.500h8v8h-8zM2 4.500h5M4.500 2v5" /></svg>
      </button>
      <input type="checkbox" aria-label="Select order" className="h-[14px] w-[14px] appearance-none border border-[#686868] bg-[#333333]" />
    </div>
  ),
  cls: 'pb-px!',
};

const order = (time: string, name: string, side: string): CellValue[] => [
  selectCell, time, 'PRAC_167303', name, 'NRML',
  { content: side, cls: side === 'Buy' ? 'text-[#bae28d]' : 'text-[#ffa500]' },
  'Market', { content: 'Tr', cls: 'pr-0! border-r-0' },
];

const orders: CellValue[][] = [
  order('10:19:14', 'GLENMARK.Put.1480.Apr 24', 'Buy'),
  order('10:19:32', 'BIOCON.Put.330.Apr 24', 'Sell'),
  order('10:20:52', 'CIPLA.Put.1400.Apr 24', 'Buy'),
  order('10:22:00', 'HINDALCO.Put.600.Apr 24', 'Buy'),
];

const Orders = () => (
  <section className="mt-[5px] border border-[#484848]">
    <PanelTitle>Orders</PanelTitle>
    <FilterBar id="order-client" />
    <div className="ml-px border border-r-0 border-[#686868] bg-[#333333]">
      <div className="h-[101px] overflow-hidden">
        <DataGrid columns={orderColumns} rows={orders} rowClass={i => (i === 0 ? 'bg-[#484848]' : '')} />
        <div className="ml-[34px] mt-px h-[14px] w-[14px] border border-[#686868]" />
      </div>
      <ScrollBar thumb="w-[352px]" right={false} />
    </div>
    <div className="flex h-[34px] items-center gap-1 overflow-hidden border-b border-[#484848] pl-1 pt-px text-[12px] text-[#f0f0f0]">
      <button disabled className="h-[26px] w-[79px] shrink-0 border border-[#484848] text-[#828282]">Modify</button>
      <button className="h-[26px] w-[181px] shrink-0 border border-[#686868] bg-[#333333]">Cancel Or Exit Selected</button>
      <button className="h-[26px] w-[79px] shrink-0 border border-[#686868] bg-[#333333] text-[11px]">Details</button>
      <button className="h-[26px] w-[150px] shrink-0 border-2 border-[#b8442e] bg-[#333333] text-[11px]">Modify Selected</button>
      <label htmlFor="join-bid" className="w-[93px] shrink-0 whitespace-nowrap text-[13px]">Join Bid/Offer</label>
      <input id="join-bid" className="h-[22px] min-w-0 flex-1 border border-r-0 border-[#686868] bg-black" />
    </div>
    <ScrollBar thumb="w-[545px]" />
  </section>
);

const positionColumns: Column[] = [
  { title: 'Segme...', width: 54 },
  { title: 'ShortName', width: 98 },
  { title: 'NetQty', width: 61, align: 'right' },
  { title: 'MTMPL', width: 88, align: 'right' },
  { title: 'BookedPL', width: 81, align: 'right' },
  { title: 'BuyAv...', width: 52, align: 'right' },
  { title: 'SellAv...', width: 53, align: 'right' },
  { title: 'Mar...', width: 43, align: 'right' },
  { title: 'NetVal', width: 60, align: 'right' },
  { title: 'Tota', align: 'right' },
];

const position = (
  name: string, qty: string, mtm: string, booked: string, buy: string, sell: string,
  market: string, net: string, falling = false,
): CellValue[] => [
  'Eq.Opti...',
  { content: name, cls: name.startsWith('HINDALCO') ? 'bg-[#444444]' : '' },
  { content: qty, cls: qty ? 'bg-[#00ff00] text-[#2f6f2f]' : 'bg-[#333333]' },
  { content: mtm, cls: 'text-[#dc1430]' },
  { content: booked, cls: 'text-[#00ff00]' },
  buy, sell,
  { content: market, cls: falling ? 'bg-[#730000]' : '' },
  { content: net, cls: 'px-[2px]!' }, '',
];

const positions: CellValue[][] = [
  position('VEDL.Put.410.A...', '', '', '3,565.00', '12.50', '14.05', '20.85', '3,565.00', true),
  position('SAIL.Put.110.Ap...', '4000', '-400.00', '', '3.35', '', '3.25', '-13,400.00', true),
  position('HINDALCO.Put...', '', '', '2,800.00', '12.95', '13.95', '17.95', '2,800.00', true),
  position('OFSS.Put.7400....', '200', '-1,650.00', '', '245.75', '', '237.50', '-49,150.00', true),
  position('ADANIGREEN.P...', '', '', '1,050.00', '39.50', '40.90', '39.10', '1,050.00'),
  position('BIOCON.Put.33...', '', '', '2,375.00', '14.35', '15.30', '13.95', '2,375.00'),
  position('BHARTIARTL.C...', '', '', '4,560.00', '30.50', '35.30', '22.25', '4,560.00'),
  position('GLENMARK.Put...', '650', '-11,342.50', '', '58.15', '', '40.70', '-37,797.50', true),
  position('M&M.Put.2550....', '350', '-3,587.50', '', '65.10', '', '54.85', '-22,785.00', true),
  position('ZYDUSLIFE.Put....', '', '', '8,280.00', '25.10', '34.30', '20.95', '8,280.00'),
  position('COFORGE.Put.6...', '', '', '3,840.00', '245.00', '270.60', '315.00', '3,840.00', true),
];

const Positions = () => (
  <section className="mt-[5px] border border-[#484848]">
    <PanelTitle>Positions</PanelTitle>
    <div className="flex h-[30px] items-center overflow-hidden whitespace-nowrap pl-[3px] text-[11px] text-[#7ec0e0]">
      <span className="w-[29px] shrink-0 text-[#f0f0f0]">Type</span>
      <SelectBox label="Type" value="Net" className="w-[52px]" />
      <IconButton label="Refresh" className="ml-[2px] h-[22px] w-[22px]"><RefreshIcon /></IconButton>
      <IconButton label="Columns" className="ml-[2px] h-[22px] w-[22px]"><TableIcon /></IconButton>
      <IconButton label="More" className="ml-[3px] h-[22px] w-[22px]"><Caret /></IconButton>
      <span className="ml-1 w-[95px] shrink-0">MTM : -23,675.00</span>
      <span className="w-[82px] shrink-0">BPL : 37,853.00</span>
      <span className="w-[57px] shrink-0">NQ : 5850</span>
      <span className="w-[51px] shrink-0 pt-[2px] font-['DejaVu_Sans'] text-[8px] text-[#00ff00]">BQ : 21549</span>
      <span className="w-[87px] shrink-0 text-[#00ff00]">BV : 5,66,244.45</span>
      <span className="w-[87px] shrink-0 text-[#dc1430]">SV : 4,55,419.95</span>
      <span className="text-[#dc1430]">SQ</span>
    </div>
    <div className="ml-[3px] border border-r-0 border-[#686868] bg-[#333333]">
      <div className="h-[221px] overflow-hidden">
        <DataGrid columns={positionColumns} rows={positions} rowClass={() => 'bg-[#000040]'} />
      </div>
      <div className="flex h-[39px] items-center gap-[2px] border-t border-[#484848] pl-[214px] text-[11px] text-[#f0f0f0]">
        <span className="flex h-[26px] w-[86px] items-center justify-center bg-[#444444]">SUM=-23,675...</span>
        <span className="flex h-[26px] w-[79px] items-center justify-center bg-[#444444]">SUM=37,85...</span>
      </div>
      <ScrollBar thumb="w-[438px]" right={false} />
    </div>
    <div className="flex h-[27px] items-center gap-[2px] overflow-hidden whitespace-nowrap pl-[3px] pt-[3px] text-[11px] text-[#f0f0f0]">
      <button disabled className="h-[22px] w-[112px] shrink-0 border border-[#484848] text-[#828282]">MIS &lt;---&gt; Delivery</button>
      <button disabled className="h-[22px] w-[72px] shrink-0 border border-[#484848] text-[#828282]">Square Off</button>
      <button className="h-[22px] w-[114px] shrink-0 border border-[#686868] bg-[#333333]">SquareOff@Market</button>
      <button disabled className="h-[22px] w-[100px] shrink-0 border border-[#484848] text-[#828282]">Reverse Position</button>
      <button className="h-[22px] w-[183px] shrink-0 border border-[#686868] bg-[#333333]">Auto Square Off (Max Loss/Profit)</button>
      <button className="h-[22px] w-[80px] shrink-0 border border-[#686868] bg-[#333333] pl-2 text-left">Roll Over</button>
    </div>
    <ScrollBar thumb="w-[552px]" />
  </section>
);

/* ---------- Page ---------- */

const menu: [string, string][] = [
  ['FoxNet: STAR', 'w-[88px]'],
  ['Orders', 'w-[52px]'],
  ['Charts', 'w-[51px]'],
  ['Monitor', 'w-[60px]'],
  ['F & O', 'w-12'],
  ['Scans', 'w-[47px]'],
  ['Signals', 'w-[54px]'],
  ['Ready', 'w-[50px]'],
];

const App: React.FC = () => (
  <div className="flex min-h-screen overflow-hidden bg-[#262626] font-['Open_Sans',sans-serif]">
    <div className="flex min-w-0 flex-[785] flex-col">
      <nav className="flex h-[27px] items-center whitespace-nowrap border-b border-[#484848] bg-[#333333] pl-2 text-[11px] text-[#f0f0f0]">
        {menu.map(([label, width]) => (
          <button key={label} className={`shrink-0 text-left ${width}`}>{label}</button>
        ))}
        <WifiIcon />
        <button className="ml-[17px] w-[46px] text-left text-[#00ff00]">Servers</button>
        <span className="w-[74px]">02:44:06 PM</span>
        <button aria-label="Search"><KeySearchIcon /></button>
      </nav>
      <div className="flex flex-1 bg-[#2b2b2b]">
        <MarketWatch />
        <div className="min-w-0 flex-1 pr-px">
          <div className="ml-4 flex h-[9px] gap-[5px] pt-[3px]">
            <span className="h-[6px] w-[218px] border border-b-0 border-[#484848]" />
            <span className="h-[6px] w-[168px] border border-b-0 border-[#484848]" />
            <span className="h-[6px] flex-1 border border-b-0 border-[#484848]" />
          </div>
          <Holdings />
          <ChartPanel />
        </div>
      </div>
    </div>
    <div className="relative flex min-w-0 flex-[645] flex-col pt-[9px]">
      {/* Status strip behind the floating container */}
      <div className="absolute inset-x-0 top-0 h-[27px] overflow-hidden border-b border-[#484848] bg-[#333333]">
        <span className="absolute right-[34px] top-[6px] h-px w-[14px] bg-[#12c61a]" />
        <svg width="12" height="14" viewBox="0 0 12 14" className="absolute right-0 top-[5px]">
          <circle cx="8" cy="7" r="7" fill="#c62a20" />
          <path d="M4 3l8 8" stroke="#f4d0cc" strokeWidth="2" />
        </svg>
      </div>
      <section className="relative mr-[6px] overflow-hidden border border-[#484848] bg-[#262626] pb-[2px] pl-[2px] pr-[2px]">
        <div className="flex h-[21px] items-center justify-between pb-px pl-[3px] pr-[4px]">
          <h1 className="text-[12px] font-bold leading-[18px] text-white">panelContainer1</h1>
          <button aria-label="Close"><CloseIcon /></button>
        </div>
        <Trades />
        <Orders />
        <Positions />
      </section>
    </div>
  </div>
);

export default App;
